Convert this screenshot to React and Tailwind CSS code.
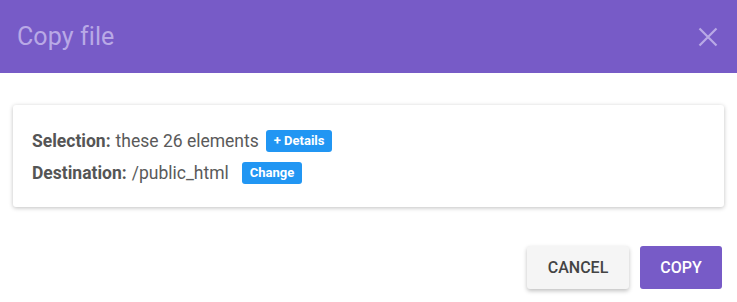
import React from 'react';

export default function App() {
  return (
    <div className="w-[737px] h-[302px] bg-white font-['Roboto',sans-serif] overflow-hidden">
      {/* Header */}
      <div className="h-[73px] bg-[#775bc7] flex items-center justify-between pl-[17px] pr-[19px]">
        <h2 className="text-[25px] text-[#b9a9e6] leading-none tracking-[0.1px]">Copy file</h2>
        <button className="text-[#b9a9e6]" aria-label="Close">
          <svg width="20" height="20" viewBox="0 0 20 20" fill="none" stroke="currentColor" strokeWidth="2.2">
            <path d="M1.5 1.5 L18.5 18.5 M18.5 1.5 L1.5 18.5" />
          </svg>
        </button>
      </div>

      {/* Body */}
      <div className="px-[13px] pt-[32px]">
        <div className="bg-white rounded-[3px] shadow-[0_1px_4px_rgba(0,0,0,0.25)] pl-[19px] pt-[20px] pb-[18px] text-[17.5px] text-[#5a5a5a]">
          <div className="flex items-center h-[32px]">
            <span className="font-bold text-[#555]">Selection:</span>
            <span className="ml-[5px]">these 26 elements</span>
            <span className="ml-[7px] bg-[#2196f3] text-white text-[13px] font-bold rounded-[3px] h-[22px] px-[8px] flex items-center">+ Details</span>
          </div>
          <div className="flex items-center h-[32px]">
            <span className="font-bold text-[#555]">Destination:</span>
            <span className="ml-[5px]">/public_html</span>
            <span className="ml-[13px] bg-[#2196f3] text-white text-[13px] font-bold rounded-[3px] h-[22px] px-[8px] flex items-center">Change</span>
          </div>
        </div>
      </div>

      {/* Footer */}
      <div className="flex justify-end gap-[11px] pr-[15px] pt-[39px]">
        <button className="w-[102px] h-[43px] bg-[#f5f5f5] text-[#444] text-[16px] font-medium rounded-[3px] shadow-[0_2px_4px_rgba(0,0,0,0.25)]">CANCEL</button>
        <button className="w-[82px] h-[43px] bg-[#775bc7] text-white text-[16px] font-medium rounded-[3px]">COPY</button>
      </div>
    </div>
  );
}
